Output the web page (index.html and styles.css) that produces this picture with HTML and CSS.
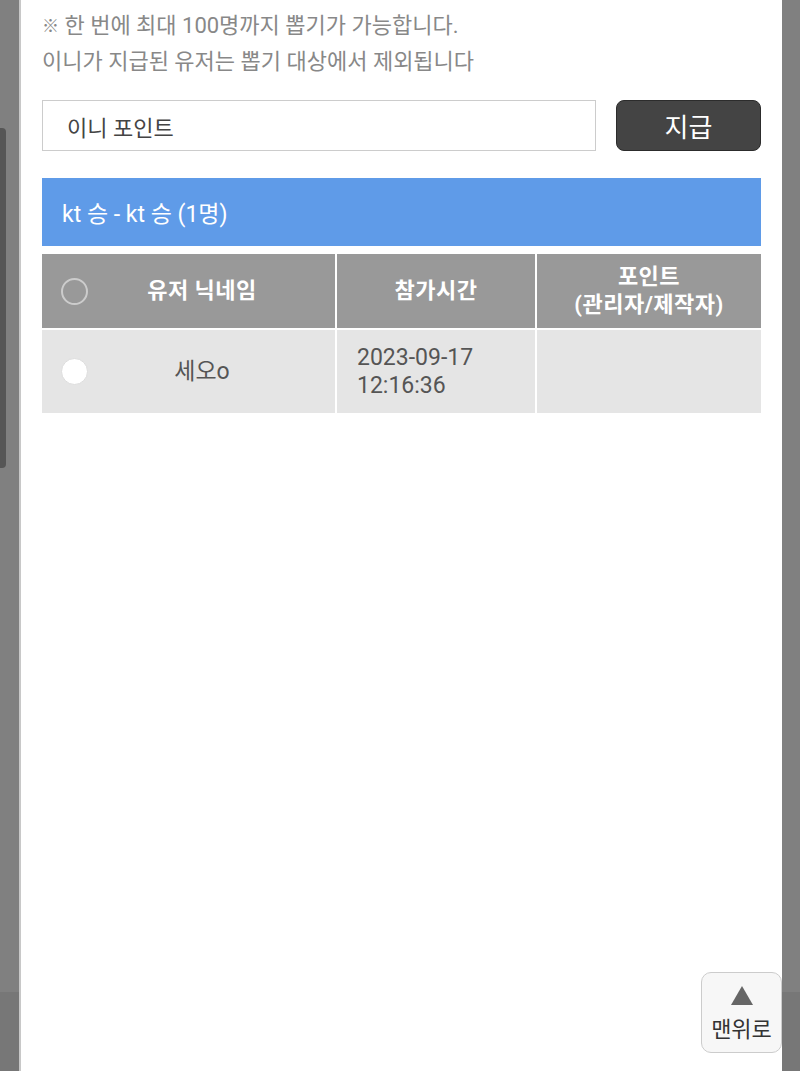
FILE: index.html
```html
<!DOCTYPE html>
<html>
<head>
  <meta charset="utf-8">
  <title>이니 지급</title>
  <link rel="stylesheet" href="styles.css">
</head>
<body>
  <div class="side-handle"></div>
  <div class="panel">
    <div class="notes">
      <p><span class="mark">※</span> 한 번에 최대 100명까지 뽑기가 가능합니다.</p>
      <p>이니가 지급된 유저는 뽑기 대상에서 제외됩니다</p>
    </div>
    <div class="give-row">
      <input id="point-input" type="text" value="이니 포인트">
      <button id="give-button">지급</button>
    </div>
    <div class="group-title">kt 승 - kt 승 (1명)</div>
    <div class="user-table">
      <div class="cell head name-cell">
        <span class="radio empty"></span>
        <span class="name">유저 닉네임</span>
      </div>
      <div class="cell head">참가시간</div>
      <div class="cell head">포인트<br>(관리자/제작자)</div>

      <div class="cell row name-cell">
        <span class="radio"></span>
        <span class="name">세오o</span>
      </div>
      <div class="cell row time-cell">2023-09-17<br>12:16:36</div>
      <div class="cell row"></div>
    </div>
  </div>
  <button id="top-button">
    <svg width="22" height="19" viewBox="0 0 22 19"><polygon points="11,0 22,19 0,19" fill="#666"/></svg>
    <span>맨위로</span>
  </button>
</body>
</html>
```

FILE: styles.css
```css
body {
  margin: 0;
  padding: 0;
  min-height: 1071px;
  background: linear-gradient(#808080 0, #808080 992px, #777 992px);
  font-family: Roboto, "Noto Sans CJK KR", sans-serif;
}
.side-handle {
  position: absolute;
  left: 0;
  top: 128px;
  width: 6px;
  height: 340px;
  background-color: #565656;
  border-radius: 0 4px 4px 0;
}
.panel {
  box-sizing: border-box;
  margin-left: 19px;
  width: 763px;
  min-height: 1071px;
  padding: 8px 21px 0 21px;
  background-color: #fff;
  border-left: 2px solid #c8c8c8;
}
.notes p {
  margin: 0;
  height: 36px;
  font-size: 22px;
  line-height: 36px;
  color: #888;
}
.notes .mark {
  font-size: 17px;
  vertical-align: 1px;
}
.give-row {
  display: flex;
  gap: 20px;
  margin-top: 20px;
  height: 51px;
}
#point-input {
  box-sizing: border-box;
  width: 554px;
  height: 51px;
  padding: 0 24px;
  border: 1px solid #ccc;
  font-family: inherit;
  font-size: 22px;
  color: #444;
  outline: none;
}
#give-button {
  flex: 1;
  border: 1px solid #2c2c2c;
  border-radius: 8px;
  background-color: #444;
  color: #fff;
  font-family: inherit;
  font-size: 26px;
  cursor: pointer;
}
.group-title {
  margin-top: 27px;
  height: 68px;
  padding-left: 20px;
  display: flex;
  align-items: center;
  background-color: #5f9be8;
  color: #fff;
  font-size: 23px;
}
.user-table {
  display: grid;
  grid-template-columns: 293px 198px 1fr;
  grid-template-rows: 74px 83px;
  gap: 2px;
  margin-top: 8px;
}
.cell {
  display: flex;
  align-items: center;
  justify-content: center;
  text-align: center;
}
.cell.head {
  background-color: #999;
  color: #fff;
  font-weight: bold;
  font-size: 22px;
  letter-spacing: 0.5px;
  line-height: 28px;
}
.cell.row {
  background-color: #e5e5e5;
  color: #555;
  font-size: 23px;
  line-height: 28px;
}
.name-cell {
  padding: 0 19px;
}
.name-cell .name {
  flex: 1;
}
.radio {
  box-sizing: border-box;
  width: 27px;
  height: 27px;
  border-radius: 50%;
  background-color: #fff;
  border: 1px solid #ddd;
}
.radio.empty {
  background-color: transparent;
  border: 2px solid #ccc;
}
.time-cell {
  justify-content: flex-start;
  text-align: left;
  padding-left: 20px;
}
#top-button {
  position: fixed;
  right: 18px;
  bottom: 18px;
  width: 81px;
  height: 81px;
  display: flex;
  flex-direction: column;
  align-items: center;
  justify-content: center;
  gap: 6px;
  padding: 4px 0 0 0;
  background-color: #f7f7f7;
  border: 1px solid #ccc;
  border-radius: 10px;
  font-family: inherit;
  font-size: 22px;
  color: #333;
  cursor: pointer;
}
```
